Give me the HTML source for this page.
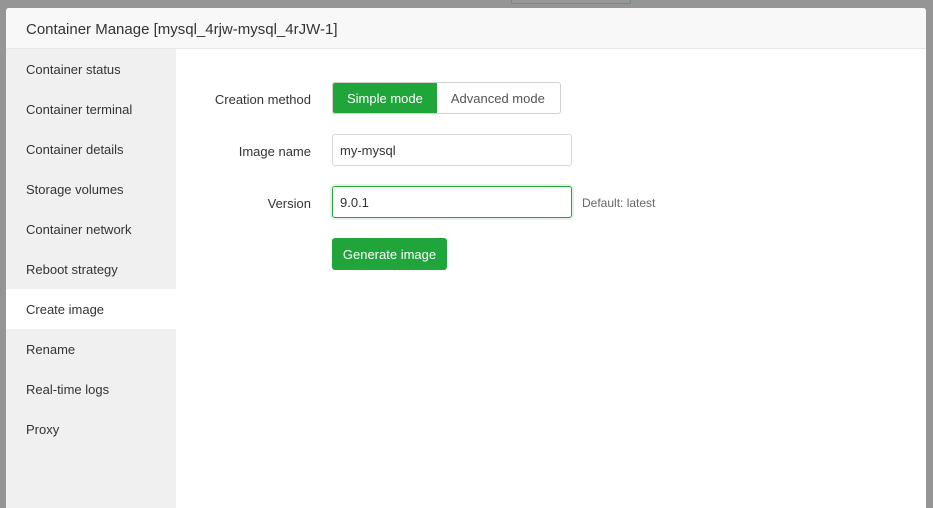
<!DOCTYPE html>
<html><head><meta charset="utf-8"><style>
*{box-sizing:border-box;margin:0;padding:0}
body{width:933px;height:505px;background:#959595;font-family:"Liberation Sans",Arial,sans-serif;position:relative;overflow:hidden}
.gbtn{position:absolute;left:511px;top:-4px;width:120px;height:8px;border:1px solid #6f8f6f;border-radius:2px;background:#979997}
.modal{position:absolute;left:6px;top:8px;width:920px;height:500px;background:#fff;border-radius:3px 3px 0 0;overflow:hidden}
.hd{height:41px;background:#f8f8f8;border-bottom:1px solid #e8e8e8;padding-left:20px;line-height:43px;font-size:15px;color:#333}
.side{position:absolute;left:0;top:41px;width:170px;bottom:0;background:#f0f0f0}
.side div{height:40px;line-height:42px;padding-left:20px;font-size:13px;color:#333}
.side .on{background:#fff}
.lbl{position:absolute;font-size:13px;color:#333;text-align:right;width:130px;left:175px}
.seg{position:absolute;left:326px;top:74px;height:32px;display:flex;border-radius:3px;overflow:hidden;border:1px solid #d0d0d0;font-size:13px}
.seg span{line-height:32px}
.seg .a{background:#20a53a;color:#fff;padding:0 14px}
.seg .b{color:#555;padding:0 14px 0 14px;width:123px}
.inp{position:absolute;left:326px;width:240px;height:32px;border:1px solid #d9d9d9;border-radius:3px;font-size:13px;color:#333;padding-left:7px;line-height:32px}
.inp.f{border-color:#20a53a;box-shadow:0 0 0 2px #e3f3e6}
.btn{position:absolute;left:326px;top:230px;height:32px;width:115px;background:#20a53a;color:#fff;border-radius:3px;font-size:13px;text-align:center;line-height:34px}
</style></head><body>
<div class="gbtn"></div>
<div class="modal">
<div class="hd">Container Manage [mysql_4rjw-mysql_4rJW-1]</div>
<div class="side">
<div>Container status</div><div>Container terminal</div><div>Container details</div><div>Storage volumes</div><div>Container network</div><div>Reboot strategy</div><div class="on">Create image</div><div>Rename</div><div>Real-time logs</div><div>Proxy</div>
</div>
<div class="lbl" style="top:84px">Creation method</div>
<div class="seg"><span class="a">Simple mode</span><span class="b">Advanced mode</span></div>
<div class="lbl" style="top:136px">Image name</div>
<div class="inp" style="top:126px">my-mysql</div>
<div class="lbl" style="top:188px">Version</div>
<div class="inp f" style="top:178px">9.0.1</div>
<div style="position:absolute;left:576px;top:188px;font-size:12px;color:#666">Default: latest</div>
<div class="btn">Generate image</div>
</div>
</body></html>
